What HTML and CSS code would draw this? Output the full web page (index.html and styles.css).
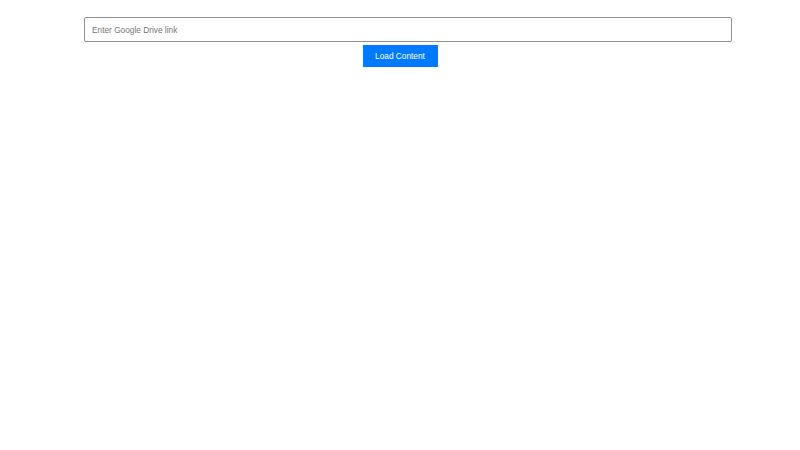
FILE: index.html
```html
<!DOCTYPE html>
<html lang="en">
<head>
<meta charset="utf-8">
<title>Google Drive Loader</title>
<link rel="stylesheet" href="styles.css">
</head>
<body>
<div class="page">
  <input class="link-input" type="text" placeholder="Enter Google Drive link">
  <button class="load-btn" type="button">Load Content</button>
</div>
</body>
</html>
```

FILE: styles.css
```css
html, body {
  margin: 0;
  padding: 0;
  background: #ffffff;
}

.page {
  display: flex;
  flex-direction: column;
  padding-top: 17px;
  font-family: "Liberation Sans", Arial, sans-serif;
}

.link-input {
  box-sizing: border-box;
  width: 648px;
  height: 25px;
  margin-left: 84px;
  padding: 0 7px;
  border: 1px solid #8f8f8f;
  border-radius: 2px;
  font-family: "Liberation Sans", Arial, sans-serif;
  font-size: 8.3px;
  color: #333;
  outline: none;
}

.link-input::placeholder {
  color: #757575;
}

.load-btn {
  align-self: center;
  box-sizing: border-box;
  width: 75px;
  height: 22px;
  margin-top: 3px;
  padding: 0;
  border: none;
  border-radius: 0;
  background: #007bff;
  color: #ffffff;
  font-family: "Liberation Sans", Arial, sans-serif;
  font-size: 8.3px;
  cursor: pointer;
}
```
